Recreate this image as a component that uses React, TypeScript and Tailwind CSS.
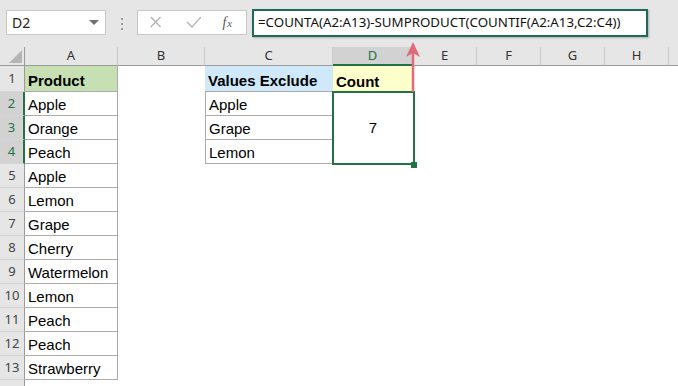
import React from 'react';

const products = ['Apple', 'Orange', 'Peach', 'Apple', 'Lemon', 'Grape', 'Cherry', 'Watermelon', 'Lemon', 'Peach', 'Peach', 'Strawberry'];
const excludes = ['Apple', 'Grape', 'Lemon'];
const columns = ['A', 'B', 'C', 'D', 'E', 'F', 'G', 'H'];

const uiFont = { fontFamily: '"Noto Sans", "Liberation Sans", sans-serif' };
const cellFont = { fontFamily: '"Liberation Sans", Arial, sans-serif' };

function RowHeader({ n }: { n: number }) {
  const selected = n >= 2 && n <= 4;
  return (
    <div
      className={`flex items-center justify-center text-[13px] border-b border-[#d4d4d4] ${
        selected
          ? 'bg-[#d2d2d2] text-[#217346] border-r-2 border-r-[#217346]'
          : 'bg-[#e6e6e6] text-[#444] border-r border-r-[#9b9b9b]'
      }`}
      style={uiFont}
    >
      {n <= 13 ? n : null}
    </div>
  );
}

function Cell({ children, className = '' }: { children?: React.ReactNode; className?: string }) {
  return (
    <div className={`flex items-end pl-[3px] pb-[1px] text-[15px] text-black leading-[18px] overflow-hidden whitespace-nowrap ${className}`} style={cellFont}>
      {children}
    </div>
  );
}

export default function App() {
  const rows: React.ReactNode[] = [];

  // column header row
  rows.push(
    <div key="corner" className="relative bg-[#e6e6e6] border-r border-b border-[#9b9b9b]">
      <div className="absolute right-[2px] bottom-[2px] w-0 h-0 border-l-[13px] border-l-transparent border-b-[13px] border-b-[#b5b5b5]" />
    </div>
  );
  columns.forEach((c) => {
    const sel = c === 'D';
    rows.push(
      <div
        key={`h${c}`}
        className={`flex items-center justify-center text-[13px] border-r border-r-[#c8c8c8] ${
          sel ? 'bg-[#d2d2d2] text-[#217346] border-b-2 border-b-[#217346]' : 'bg-[#e6e6e6] text-[#333] border-b border-b-[#9b9b9b]'
        }`}
        style={uiFont}
      >
        {c}
      </div>
    );
  });
  rows.push(<div key="hx" className="bg-[#e6e6e6] border-b border-[#9b9b9b]" />);

  for (let r = 1; r <= 14; r++) {
    rows.push(<RowHeader key={`r${r}`} n={r} />);

    // A
    if (r === 1) {
      rows.push(<Cell key={`a${r}`} className="bg-[#c6e0b4] font-bold border-r border-b border-[#ababab]">Product</Cell>);
    } else if (r <= 13) {
      rows.push(<Cell key={`a${r}`} className="border-r border-b border-[#ababab]">{products[r - 2]}</Cell>);
    } else {
      rows.push(<Cell key={`a${r}`} />);
    }

    // B
    rows.push(<Cell key={`b${r}`} />);

    // C
    if (r === 1) {
      rows.push(<Cell key={`c${r}`} className="bg-[#cfe9fb] font-bold border-b border-[#ababab]">Values Exclude</Cell>);
    } else if (r <= 4) {
      rows.push(<Cell key={`c${r}`} className="border-l border-r border-b border-[#ababab]">{excludes[r - 2]}</Cell>);
    } else {
      rows.push(<Cell key={`c${r}`} />);
    }

    // D
    if (r === 1) {
      rows.push(<Cell key={`d${r}`} className="bg-[#ffffcc] font-bold">Count</Cell>);
    } else if (r === 2) {
      rows.push(
        <div key="d2" className="relative row-span-3 flex items-center justify-center text-[15px] text-black" style={cellFont}>
          7
          <div className="absolute left-[-1px] top-[-1px] right-[-2px] bottom-[-1px] border-2 border-[#217346]" />
          <div className="absolute right-[-4px] bottom-[-4px] w-[6px] h-[6px] bg-[#217346]" />
        </div>
      );
    } else if (r > 4) {
      rows.push(<Cell key={`d${r}`} />);
    }

    // E..H + extra
    ['e', 'f', 'g', 'h', 'x'].forEach((k) => rows.push(<Cell key={`${k}${r}`} />));
  }

  return (
    <div className="relative w-[678px] h-[386px] overflow-hidden bg-white">
      {/* Toolbar */}
      <div className="flex items-start h-[47px] bg-[#e6e6e6]">
        <div className="mt-[10px] ml-[6px] w-[100px] h-[25px] bg-white border border-[#c6c6c6] flex items-center justify-between pl-[5px] pr-[6px]">
          <span className="text-[14px] text-[#222]" style={uiFont}>D2</span>
          <span className="w-0 h-0 border-l-[5px] border-r-[5px] border-t-[5px] border-l-transparent border-r-transparent border-t-[#707070]" />
        </div>
        <div className="w-[31px] h-[47px] flex flex-col items-center justify-center gap-[3px]">
          <span className="w-[2px] h-[2px] bg-[#9a9a9a]" />
          <span className="w-[2px] h-[2px] bg-[#9a9a9a]" />
          <span className="w-[2px] h-[2px] bg-[#9a9a9a]" />
        </div>
        <div className="mt-[10px] w-[110px] h-[25px] bg-white border border-[#c6c6c6] flex items-center">
          <svg width="110" height="23" viewBox="0 0 110 23">
            <path d="M13 6 L23 16 M23 6 L13 16" stroke="#b3b3b3" strokeWidth="1.4" fill="none" />
            <path d="M50 11 L55 16 L64 6" stroke="#b3b3b3" strokeWidth="1.4" fill="none" />
            <text x="86" y="16" fontSize="14" fontStyle="italic" fill="#555" fontFamily='"Liberation Serif", serif'>f</text>
            <text x="91" y="16" fontSize="11" fontStyle="italic" fill="#555" fontFamily='"Liberation Serif", serif'>x</text>
          </svg>
        </div>
        <div className="mt-[9px] ml-[5px] w-[396px] h-[28px] bg-white border-2 border-[#1d6a5a] shadow-[1px_1px_2px_rgba(0,0,0,0.25)] flex items-center pl-[4px]">
          <span className="text-[13.3px] text-[#111] whitespace-nowrap" style={uiFont}>
            =COUNTA(A2:A13)-SUMPRODUCT(COUNTIF(A2:A13,C2:C4))
          </span>
        </div>
      </div>

      {/* Sheet */}
      <div className="grid grid-cols-[25px_93px_87px_128px_80px_64px_64px_64px_64px_1fr] grid-rows-[19px_26px_repeat(13,24px)]">
        {rows}
      </div>

      {/* Red annotation arrow */}
      <svg className="absolute left-[403px] top-[40px]" width="20" height="54" viewBox="0 0 20 54">
        <path d="M10 6 L10 52" stroke="#e06a78" strokeWidth="2.5" />
        <path d="M10 2 L3 17 L10 13 L17 17 Z" fill="#e06a78" />
      </svg>
    </div>
  );
}
